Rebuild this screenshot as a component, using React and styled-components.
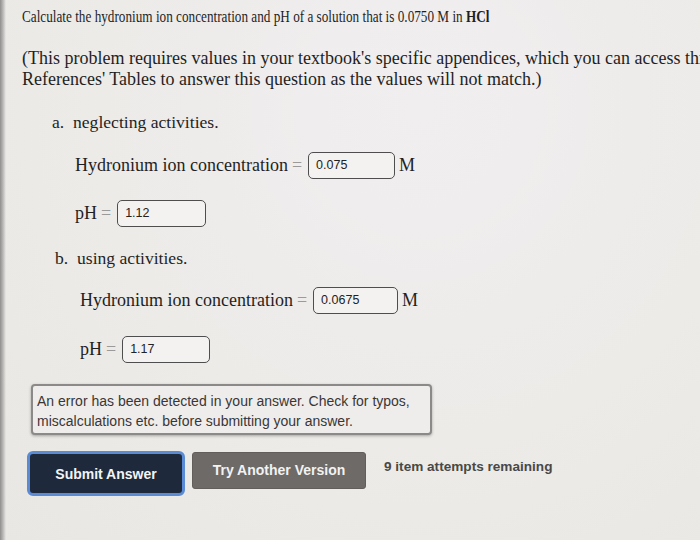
import React from 'react'
import styled, { createGlobalStyle } from 'styled-components'

const GlobalStyle = createGlobalStyle`
    html, body {
        margin: 0;
        padding: 0;
        background: #ecebe9;
    }
`

const Page = styled.div`
    width: 700px;
    height: 540px;
    box-sizing: border-box;
    overflow: hidden;
    padding: 6px 0 0 22px;
    background:
        linear-gradient(90deg, #8f8e8c 0, #b9b8b6 3px, rgba(236, 235, 233, 0) 6px),
        radial-gradient(ellipse at 60% 20%, #f1eef0 0%, #ecebe8 55%, #e8e7e4 100%);
    font-family: "Liberation Serif", "Times New Roman", serif;
    color: #1f1f1f;
`

// the title reads condensed in the shot, so squeeze it sideways
const Title = styled.div`
    font-size: 17.5px;
    line-height: 20px;
    white-space: nowrap;
    transform: scaleX(0.755);
    transform-origin: left center;

    b {
        font-weight: bold;
    }
`

const Note = styled.div`
    margin-top: 22px;
    font-size: 18px;
    line-height: 21px;
    white-space: nowrap;
`

const PartLabel = styled.div`
    margin: ${p => p.$top}px 0 0 ${p => p.$indent}px;
    font-size: 17.6px;
    line-height: 20px;
`

const Row = styled.div`
    display: flex;
    align-items: center;
    height: 30px;
    margin: ${p => p.$top}px 0 0 ${p => p.$indent}px;
    font-size: 18px;
`

const Eq = styled.span`
    color: #9a9a9a;
    margin: 0 6px 0 4px;
`

const Field = styled.div`
    width: ${p => p.$w}px;
    height: 27px;
    box-sizing: border-box;
    border: 1.5px solid #4e4e4e;
    border-radius: 5px;
    background: #f3f2f1;
    display: flex;
    align-items: center;
    padding-left: 7px;
    font-family: "Liberation Sans", Arial, sans-serif;
    font-size: 12.5px;
    color: #222;
`

const Unit = styled.span`
    margin-left: 4px;
`

const ErrorBox = styled.div`
    margin: 20px 0 0 9px;
    width: 401px;
    height: 51px;
    box-sizing: border-box;
    border: 2px solid #8c8a88;
    border-radius: 4px;
    background: #efedeb;
    box-shadow: 0 1px 3px rgba(0, 0, 0, 0.3);
    padding: 5px 4px;
    font-family: "Liberation Sans", Arial, sans-serif;
    font-size: 14px;
    line-height: 20px;
    color: #3a3636;
    white-space: nowrap;
`

const Actions = styled.div`
    display: flex;
    align-items: flex-start;
    margin: 16px 0 0 5px;
`

const SubmitButton = styled.button`
    width: 158px;
    height: 45px;
    box-sizing: border-box;
    border: 3px solid #5b8bd4;
    border-radius: 6px;
    background: #1e2a3b;
    color: #f4f4f4;
    font-family: "Liberation Sans", Arial, sans-serif;
    font-weight: bold;
    font-size: 14px;
    padding: 0;
    cursor: pointer;
`

const AltButton = styled.button`
    width: 174px;
    height: 37px;
    margin: 1px 0 0 7px;
    box-sizing: border-box;
    border: 1px solid #615e5c;
    border-radius: 3px;
    background: #6d6a68;
    color: #f2f2f2;
    font-family: "Liberation Sans", Arial, sans-serif;
    font-weight: bold;
    font-size: 14px;
    padding: 0 0 2px;
    cursor: pointer;
`

const Remaining = styled.span`
    margin: 8px 0 0 18px;
    font-family: "Liberation Sans", Arial, sans-serif;
    font-weight: bold;
    font-size: 13.6px;
    color: #4a4846;
`

function App() {
    return (
        <>
            <GlobalStyle />
            <Page>
                <Title>
                    Calculate the hydronium ion concentration and pH of a solution that is 0.0750 M in <b>HCl</b>
                </Title>
                <Note>
                    (This problem requires values in your textbook's specific appendices, which you can access through the
                    <br />
                    References' Tables to answer this question as the values will not match.)
                </Note>

                <PartLabel $top={22} $indent={30}>a.&nbsp; neglecting activities.</PartLabel>
                <Row $top={18} $indent={53}>
                    Hydronium ion concentration<Eq>=</Eq>
                    <Field $w={87}>0.075</Field>
                    <Unit>M</Unit>
                </Row>
                <Row $top={18} $indent={53}>
                    pH<Eq>=</Eq>
                    <Field $w={89}>1.12</Field>
                </Row>

                <PartLabel $top={20} $indent={33}>b.&nbsp; using activities.</PartLabel>
                <Row $top={17} $indent={58}>
                    Hydronium ion concentration<Eq>=</Eq>
                    <Field $w={85}>0.0675</Field>
                    <Unit>M</Unit>
                </Row>
                <Row $top={19} $indent={58}>
                    pH<Eq>=</Eq>
                    <Field $w={88}>1.17</Field>
                </Row>

                <ErrorBox>
                    An error has been detected in your answer. Check for typos,
                    <br />
                    miscalculations etc. before submitting your answer.
                </ErrorBox>

                <Actions>
                    <SubmitButton>Submit Answer</SubmitButton>
                    <AltButton>Try Another Version</AltButton>
                    <Remaining>9 item attempts remaining</Remaining>
                </Actions>
            </Page>
        </>
    )
}

export default App
